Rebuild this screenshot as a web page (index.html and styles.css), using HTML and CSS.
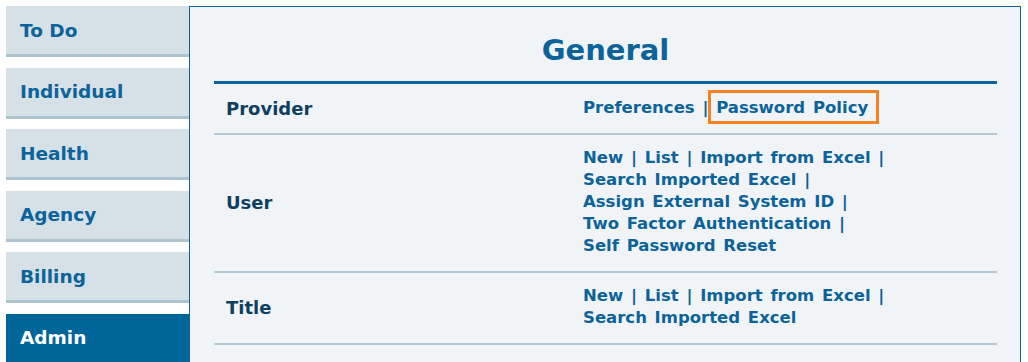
FILE: index.html
```html
<!DOCTYPE html>
<html lang="en">

<head>
    <meta charset="UTF-8">
    <title>Admin - General</title>
    <link rel="stylesheet" href="styles.css">
</head>

<body>
    <div class="page">
        <!-- left tabs -->
        <ul class="tabs">
            <li class="tab">To Do</li>
            <li class="tab">Individual</li>
            <li class="tab">Health</li>
            <li class="tab">Agency</li>
            <li class="tab">Billing</li>
            <li class="tab active">Admin</li>
        </ul>

        <!-- main panel -->
        <div class="panel">
            <h1 class="title">General</h1>
            <div class="table">
                <div class="row first">
                    <div class="label">Provider</div>
                    <div class="links">
                        <a href="#">Preferences</a> | <a href="#" class="focus">Password Policy</a>
                    </div>
                </div>
                <div class="row">
                    <div class="label">User</div>
                    <div class="links">
                        <a href="#">New</a> | <a href="#">List</a> | <a href="#">Import from Excel</a> |<br>
                        <a href="#">Search Imported Excel</a> |<br>
                        <a href="#">Assign External System ID</a> |<br>
                        <a href="#">Two Factor Authentication</a> |<br>
                        <a href="#">Self Password Reset</a>
                    </div>
                </div>
                <div class="row">
                    <div class="label">Title</div>
                    <div class="links">
                        <a href="#">New</a> | <a href="#">List</a> | <a href="#">Import from Excel</a> |<br>
                        <a href="#">Search Imported Excel</a>
                    </div>
                </div>
            </div>
        </div>
    </div>
</body>

</html>
```

FILE: styles.css
```css
* {
    margin: 0;
    padding: 0;
    box-sizing: border-box;
}

body {
    background-color: #fff;
    font-family: "DejaVu Sans", Verdana, sans-serif;
    font-weight: bold;
    overflow: hidden;
}

.page {
    display: flex;
    align-items: flex-start;
    padding: 6px 0 0 6px;
}

/* left side tabs */
.tabs {
    list-style: none;
    width: 183px;
    flex-shrink: 0;
}

.tab {
    height: 51px;
    margin-bottom: 10.6px;
    padding-left: 14px;
    display: flex;
    align-items: center;
    background-color: #d6e0e7;
    border-bottom: 3px solid #afc4d1;
    color: #0c6399;
    font-size: 18.5px;
}

.tab.active {
    background-color: #006599;
    border-bottom-color: #006599;
    color: #fff;
}

/* main panel */
.panel {
    width: 832px;
    height: 400px;
    background-color: #f1f4f6;
    border: 1px solid #0c6399;
    padding: 0 23px 0 24px;
}

.title {
    text-align: center;
    color: #0c6399;
    font-size: 29px;
    line-height: 36px;
    padding-top: 25px;
    padding-bottom: 13px;
    border-bottom: 3px solid #0c6399;
}

.row {
    display: grid;
    grid-template-columns: 357px 1fr;
    align-items: center;
    border-bottom: 2px solid #b4c7d4;
    padding: 12px 0 14px;
}

.row.first {
    padding-top: 13px;
}

.label {
    padding-left: 12px;
    color: #0f3f60;
    font-size: 18px;
}

.links {
    padding-left: 12px;
    color: #0c6399;
    font-size: 16.5px;
    line-height: 22px;
    word-spacing: 2px;
}

.links a {
    color: #0c6399;
    text-decoration: none;
}

/* focused link gets the orange frame */
.links a.focus {
    outline: 3px solid #f5821f;
    outline-offset: 3px;
    margin-left: -2px;
    padding: 2px 5px 1px 2px;
}
```
